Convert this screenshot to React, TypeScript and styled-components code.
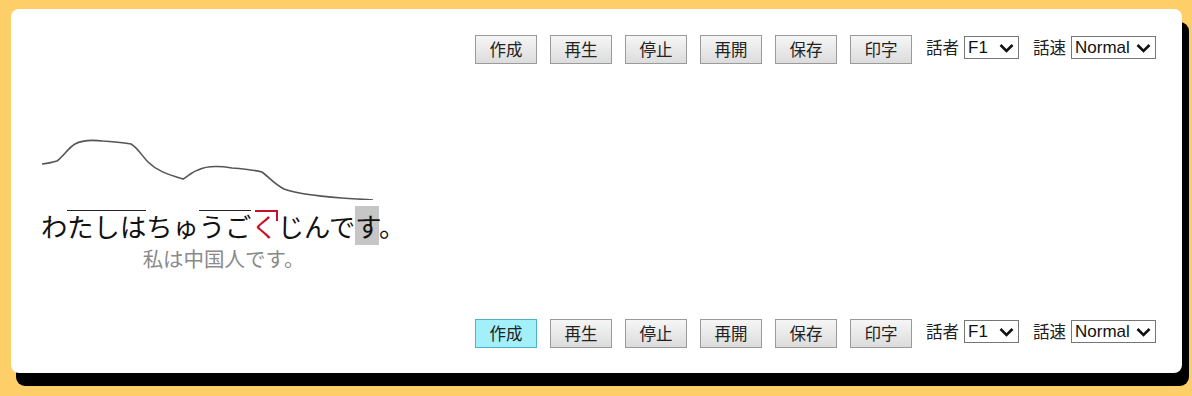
import styled, { createGlobalStyle } from "styled-components";

const GlobalStyle = createGlobalStyle`
  html {
    background: #fecf69;
  }
  body {
    margin: 0;
    padding: 9px 10px 23px 11px;
    font-family: "Noto Sans CJK JP", "Noto Sans", sans-serif;
  }
`

const Card = styled.div`
  position: relative;
  width: 1171px;
  height: 364px;
  box-sizing: border-box;
  background: #fff;
  border-radius: 8px;
  padding: 25px 26px 25px 31px;
  display: flex;
  flex-direction: column;

  &::before {
    content: "";
    position: absolute;
    left: 5px;
    top: 13px;
    right: -7px;
    bottom: -13px;
    background: #000;
    border-radius: 9px;
    z-index: -1;
  }
`

const Toolbar = styled.div`
  display: flex;
  justify-content: flex-end;
  align-items: center;
  height: 30px;
`

const Button = styled.button<{ $active?: boolean }>`
  width: 62px;
  height: 29px;
  margin-right: 13px;
  padding: 0;
  box-sizing: border-box;
  border: 1px solid ${ ( { $active } ) => ( $active ? "#4fb3c8" : "#9a9a9a" ) };
  background: ${ ( { $active } ) =>
    $active ? "#a3f0fb" : "linear-gradient(#f6f6f6, #dcdcdc)" };
  color: #222;
  font-family: "Noto Sans CJK JP", sans-serif;
  font-size: 16.5px;
  line-height: 27px;
  cursor: pointer;

  &:last-of-type {
    margin-right: 14px;
  }
`

const Label = styled.span`
  font-size: 16.5px;
  color: #222;
  margin-right: 5px;
  line-height: 22px;
  margin-top: -4px;
`

const Select = styled.div<{ $width: number }>`
  width: ${ ( { $width } ) => $width }px;
  height: 23px;
  box-sizing: border-box;
  border: 1px solid #767676;
  background: #fff;
  display: flex;
  align-items: center;
  justify-content: space-between;
  padding: 0 4px 0 3px;
  font-family: "Liberation Sans", Arial, sans-serif;
  font-size: 17px;
  color: #111;
  margin-right: 14px;
  margin-top: -3px;

  &:last-child {
    margin-right: 0;
  }
`

const Middle = styled.div`
  margin-top: 70px;
  display: inline-flex;
  flex-direction: column;
  align-items: center;
  align-self: flex-start;
`

const Wave = styled.svg`
  display: block;
  align-self: flex-start;
`

const Sentence = styled.div`
  font-size: 26.3px;
  line-height: 28px;
  color: #111;
  margin-top: 12px;
  white-space: nowrap;
  margin-left: -1px;
`

const High = styled.span`
  position: relative;
  &::before {
    content: "";
    position: absolute;
    left: 0;
    right: 0;
    top: 4px;
    border-top: 1.5px solid #222;
  }
`

const Drop = styled.span`
  position: relative;
  color: #c8102e;
  &::before {
    content: "";
    position: absolute;
    left: 4px;
    right: 0;
    top: 4px;
    height: 11px;
    box-sizing: border-box;
    border-top: 2px solid #c8102e;
    border-right: 2px solid #c8102e;
  }
`

const Mark = styled.span`
  background: #c6c6c6;
`

const Translation = styled.div`
  font-size: 20.5px;
  line-height: 22px;
  color: #8a8a8a;
  margin-top: 7px;
`

const Spacer = styled.div`
  flex: 1;
`

function Chevron() {
  return (
    <svg width="15" height="10" viewBox="0 0 15 10">
      <path d="M1.5 2 L7.5 8 L13.5 2" fill="none" stroke="#111" strokeWidth="2.6" />
    </svg>
  );
}

function Controls( { first }: { first?: boolean } ) {
  const names = [ "作成", "再生", "停止", "再開", "保存", "印字" ];
  return (
    <Toolbar>
      { names.map( ( n, i ) => (
        <Button key={ n } $active={ first && i === 0 }>{ n }</Button>
      ) ) }
      <Label>話者</Label>
      <Select $width={ 55 }>F1<Chevron /></Select>
      <Label>話速</Label>
      <Select $width={ 85 }>Normal<Chevron /></Select>
    </Toolbar>
  );
}

function App() {
  return (
    <>
      <GlobalStyle />
      <Card>
        <Controls />
        <Middle>
          <Wave width="334" height="66" viewBox="0 0 334 66">
            <path
              d="M0 30 C8 29 12 28 15 27 C22 22 26 14 33 10 C40 6 52 6 61 7 C75 8 84 9 89 10 C96 14 100 22 106 28 C114 36 124 40 141 45 C146 42 150 38 156 36 C164 32 178 32 190 34 C203 35 212 36 220 38 C228 44 232 50 242 55 C254 60 275 62 300 64 C312 65 322 65 331 66"
              fill="none"
              stroke="#555"
              strokeWidth="1.6"
            />
          </Wave>
          <Sentence>
            わ<High>たしは</High>ちゅ<High>うご</High><Drop>く</Drop>じんで<Mark>す</Mark>。
          </Sentence>
          <Translation>私は中国人です。</Translation>
        </Middle>
        <Spacer />
        <Controls first />
      </Card>
    </>
  );
}

export default App;
